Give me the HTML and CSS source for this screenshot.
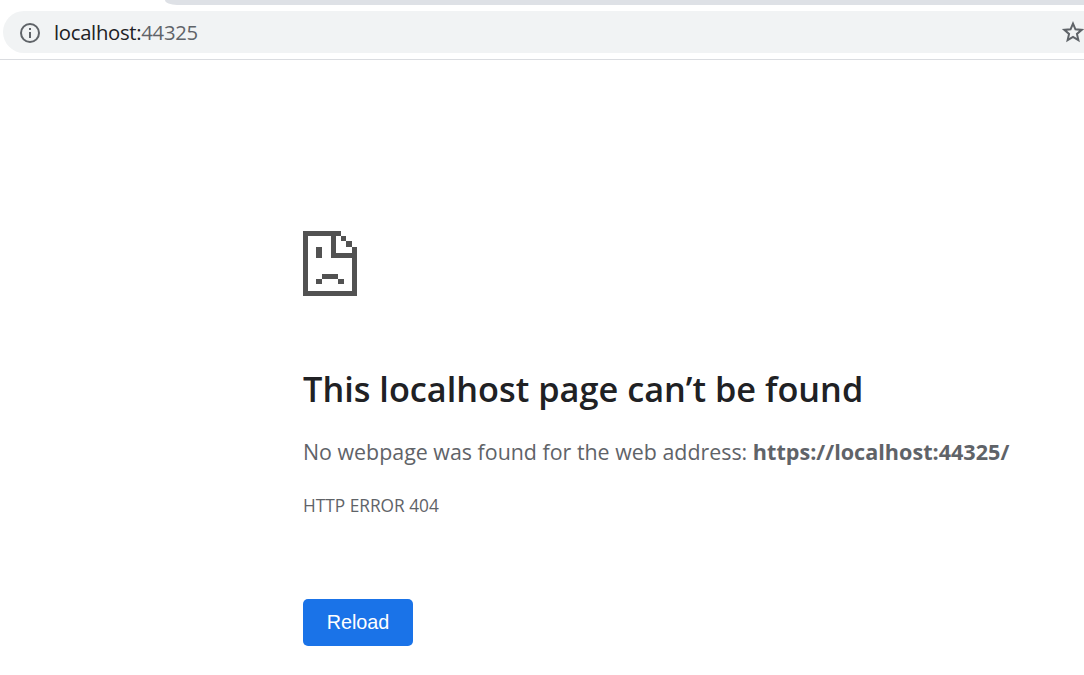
FILE: index.html
```html
<!DOCTYPE html>
<html lang="en">
<head>
<meta charset="utf-8">
<title>localhost:44325</title>
<link rel="stylesheet" href="styles.css">
</head>
<body>
<header class="chrome">
  <div class="tabstrip"><div class="tab-edge"></div></div>
  <div class="omnibox">
    <svg class="info-icon" width="20" height="20" viewBox="0 0 20 20" aria-hidden="true">
      <circle cx="10" cy="10" r="9" fill="none" stroke="#5f6368" stroke-width="2"/>
      <rect x="9" y="9" width="2" height="6" fill="#5f6368"/>
      <rect x="9" y="5" width="2" height="2" fill="#5f6368"/>
    </svg>
    <div class="url"><span class="host">localhost:</span><span class="port">44325</span></div>
    <svg class="star-icon" width="24" height="24" viewBox="0 0 24 24" aria-hidden="true">
      <path d="M12 3.6l2.45 5.75 6.25.53-4.75 4.1 1.43 6.1L12 16.85l-5.38 3.23 1.43-6.1-4.75-4.1 6.25-.53z" fill="none" stroke="#5f6368" stroke-width="2" stroke-linejoin="miter"/>
    </svg>
  </div>
</header>
<main class="error-page">
  <svg class="sad-file" width="54" height="65" viewBox="0 0 54 65" shape-rendering="crispEdges" aria-hidden="true">
    <path fill="#525252" d="M0 0H38V5H33V22H49V16H54V65H0ZM5 5V60H49V27H28V5ZM38 5H43V10H38ZM43 10H49V16H43ZM13 16H19V27H13ZM19 43H35V48H19ZM13 48H19V53H13ZM35 48H41V53H35Z"/>
  </svg>
  <h1 class="title">This localhost page can’t be found</h1>
  <p class="summary">No webpage was found for the web address: <strong>https://localhost:44325/</strong></p>
  <p class="code">HTTP ERROR 404</p>
  <button class="reload" type="button">Reload</button>
</main>
</body>
</html>
```
FILE: styles.css
```css
* { box-sizing: border-box; }
html, body { margin: 0; padding: 0; height: 100%; overflow: hidden; background: #fff; }
body { font-family: "Open Sans", "Noto Sans", sans-serif; }

.chrome { height: 60px; border-bottom: 1px solid #dadce0; display: flex; flex-direction: column; }
.tabstrip { height: 11px; padding-left: 165px; }
.tab-edge { height: 5px; background: #dee1e6; border-bottom-left-radius: 12px 5px; }
.omnibox {
  height: 42px; margin-left: 3px; padding: 0 0 0 17px;
  background: #f1f3f4; border-radius: 21px 0 0 21px;
  display: flex; align-items: center;
}
.info-icon { flex: none; margin-top: 2px; }
.url { margin-left: 14px; font-size: 20.3px; letter-spacing: -0.3px; flex: 1; }
.host { color: #202124; }
.port { color: #5f6368; }
.star-icon { flex: none; margin-right: -1px; }

.error-page { padding: 171px 0 0 303px; display: flex; flex-direction: column; align-items: flex-start; }
.sad-file { display: block; flex: none; }
.title { margin: 71px 0 0; font-size: 34.3px; line-height: 44px; font-weight: 600; color: #202124; white-space: nowrap; }
.summary { margin: 26px 0 0; font-size: 21.4px; line-height: 30px; color: #5f6368; white-space: nowrap; }
.summary strong { font-weight: 700; font-size: 21.6px; }
.code { margin: 27px 0 0; font-size: 17.3px; line-height: 24px; font-weight: 400; color: #5f6368; white-space: nowrap; }
.reload {
  margin: 81px 0 0; width: 110px; height: 47px; border: 0; border-radius: 5px;
  background: #1a73e8; color: #fff; font-family: "Liberation Sans", Arial, sans-serif; font-size: 19.8px; padding: 0;
}
```
